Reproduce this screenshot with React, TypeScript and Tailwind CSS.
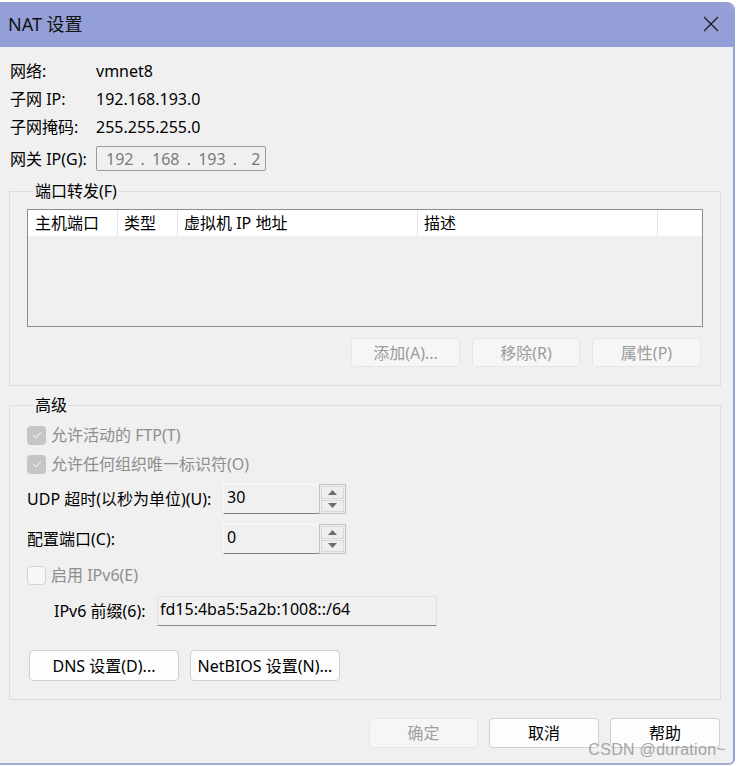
import React from "react";

const font = "font-['Noto_Sans','Noto_Sans_CJK_SC',sans-serif]";

const Check = () => (
  <svg width="10" height="8" viewBox="0 0 10 8" fill="none">
    <path d="M1 4.2 L3.8 6.8 L9 1.2" stroke="#e9e9e9" strokeWidth="1.2" />
  </svg>
);

const Arrow = ({ up }: { up?: boolean }) => (
  <svg width="9" height="5" viewBox="0 0 9 5">
    {up ? <path d="M0 5 L4.5 0 L9 5 Z" fill="#6e6e6e" /> : <path d="M0 0 L9 0 L4.5 5 Z" fill="#6e6e6e" />}
  </svg>
);

const Spinner = ({ value }: { value: string }) => (
  <div className="flex w-[123px] h-[30px]">
    <div className="flex-1 bg-[#f0f0f0] border-t border-l border-t-[#fafafa] border-l-[#fafafa] border-b border-b-[#7f7f7f] pl-[3px] leading-[24px] text-black">
      {value}
    </div>
    <div className="w-[27px] flex flex-col border border-[#c2c2c2] p-[1px] gap-[1px]">
      <div className="flex-1 border border-[#d8d8d8] bg-[#eeeeee] flex items-center justify-center">
        <Arrow up />
      </div>
      <div className="flex-1 border border-[#d8d8d8] bg-[#eeeeee] flex items-center justify-center">
        <Arrow />
      </div>
    </div>
  </div>
);

const DisabledButton = ({ label, w }: { label: string; w: string }) => (
  <div className={`${w} h-[29px] rounded-[4px] border border-[#e6e6e6] bg-[#f6f6f6] flex items-center justify-center text-[#9b9b9b]`}>
    {label}
  </div>
);

const Button = ({ label, w, h }: { label: string; w: string; h: string }) => (
  <div className={`${w} ${h} rounded-[4px] border border-[#cfcfcf] bg-[#fdfdfd] flex items-center justify-center text-black`}>
    {label}
  </div>
);

export default function App() {
  return (
    <div className={`relative w-[739px] h-[766px] bg-white overflow-hidden text-[16px] leading-[20px] ${font}`}>
      <div className="mt-[2px] w-[735px] h-[763px] bg-[#f0f0f0] border-r-2 border-b-2 border-r-[#939fd6] border-b-[#a3aad2] rounded-tr-[8px] rounded-br-[6px] overflow-hidden flex flex-col">
        {/* title bar */}
        <div className="h-[45px] bg-[#939fd6] flex items-center justify-between pl-[8px] pr-[14px]">
          <span className="text-[18px] text-[#111] pb-[1px]">NAT 设置</span>
          <svg width="16" height="16" viewBox="0 0 16 16" className="mb-[2px]">
            <path d="M1 1 L15 15 M15 1 L1 15" stroke="#1c1c1c" strokeWidth="1.3" />
          </svg>
        </div>

        <div className="flex flex-col pl-[9px] pr-[12px]">
          {/* info rows */}
          <div className="mt-[10px] pl-[1px] flex flex-col text-black">
            <div className="h-[28px] flex items-center">
              <span className="w-[86px]">网络:</span>
              <span>vmnet8</span>
            </div>
            <div className="h-[28px] flex items-center">
              <span className="w-[86px]">子网 IP:</span>
              <span>192.168.193.0</span>
            </div>
            <div className="h-[28px] flex items-center">
              <span className="w-[86px]">子网掩码:</span>
              <span>255.255.255.0</span>
            </div>
            <div className="mt-[5px] h-[25px] flex items-center">
              <span className="w-[86px]">网关 IP(G):</span>
              <div className="w-[170px] h-[25px] border border-[#9a9a9a] rounded-[2px] pl-[9px] flex items-center text-[#7c7c7c] whitespace-pre [word-spacing:3px]">
                192 . 168 . 193 .  2
              </div>
            </div>
          </div>

          {/* port forwarding */}
          <fieldset className="mt-[10px] border border-[#dcdcdc] px-[17px] pb-[18px]">
            <legend className="ml-[6px] px-[2px] text-black">端口转发(F)</legend>
            <div className="mt-[8px] h-[118px] border border-[#8a8c92] bg-[#f0f0f0] flex flex-col">
              <div className="h-[26px] bg-white flex text-black">
                <div className="w-[90px] pl-[7px] border-r border-[#e5e5e5] flex items-center">主机端口</div>
                <div className="w-[60px] pl-[6px] border-r border-[#e5e5e5] flex items-center">类型</div>
                <div className="w-[240px] pl-[6px] border-r border-[#e5e5e5] flex items-center">虚拟机 IP 地址</div>
                <div className="w-[240px] pl-[6px] border-r border-[#e5e5e5] flex items-center">描述</div>
                <div className="flex-1" />
              </div>
            </div>
            <div className="mt-[11px] mr-[2px] flex justify-end gap-[12px]">
              <DisabledButton label="添加(A)..." w="w-[109px]" />
              <DisabledButton label="移除(R)" w="w-[108px]" />
              <DisabledButton label="属性(P)" w="w-[109px]" />
            </div>
          </fieldset>

          {/* advanced */}
          <fieldset className="mt-[9px] border border-[#dcdcdc] px-[17px] pb-[18px]">
            <legend className="ml-[6px] px-[2px] text-black">高级</legend>
            <div className="mt-[10px] flex flex-col">
              <div className="h-[20px] flex items-center gap-[5px] text-[#8e8e8e]">
                <div className="w-[19px] h-[19px] rounded-[4px] bg-[#c5c5c5] flex items-center justify-center">
                  <Check />
                </div>
                <span>允许活动的 FTP(T)</span>
              </div>
              <div className="mt-[9px] h-[20px] flex items-center gap-[5px] text-[#8e8e8e]">
                <div className="w-[19px] h-[19px] rounded-[4px] bg-[#c5c5c5] flex items-center justify-center">
                  <Check />
                </div>
                <span>允许任何组织唯一标识符(O)</span>
              </div>
              <div className="mt-[10px] flex items-center text-black">
                <span className="w-[196px]">UDP 超时(以秒为单位)(U):</span>
                <Spinner value="30" />
              </div>
              <div className="mt-[10px] flex items-center text-black">
                <span className="w-[196px]">配置端口(C):</span>
                <Spinner value="0" />
              </div>
              <div className="mt-[11px] h-[20px] flex items-center gap-[5px] text-[#8e8e8e]">
                <div className="w-[19px] h-[19px] rounded-[4px] bg-[#f7f7f7] border border-[#d2d2d2]" />
                <span>启用 IPv6(E)</span>
              </div>
              <div className="mt-[11px] pl-[27px] flex items-center text-black">
                <span className="w-[103px]">IPv6 前缀(6):</span>
                <div className="w-[280px] h-[30px] bg-[#f0f0f0] border border-[#e2e2e2] border-b-[#8a8a8a] pl-[2px] pb-[4px] flex items-center">
                  fd15:4ba5:5a2b:1008::/64
                </div>
              </div>
              <div className="mt-[24px] pl-[2px] flex gap-[11px]">
                <Button label="DNS 设置(D)..." w="w-[150px]" h="h-[31px]" />
                <Button label="NetBIOS 设置(N)..." w="w-[150px]" h="h-[31px]" />
              </div>
            </div>
          </fieldset>

          {/* dialog buttons */}
          <div className="mt-[18px] mr-[1px] flex justify-end gap-[11px]">
            <div className="w-[109px] h-[30px] rounded-[4px] border border-[#e6e6e6] bg-[#f6f6f6] flex items-center justify-center text-[#a0a0a0]">
              确定
            </div>
            <Button label="取消" w="w-[110px]" h="h-[30px]" />
            <Button label="帮助" w="w-[110px]" h="h-[30px]" />
          </div>
        </div>
      </div>

      <div className="absolute right-[13px] bottom-[6px] font-['Liberation_Sans',sans-serif] text-[16px] leading-[20px] tracking-[0.3px] text-[#8f8f8f]/80">
        CSDN @duration~
      </div>
    </div>
  );
}
